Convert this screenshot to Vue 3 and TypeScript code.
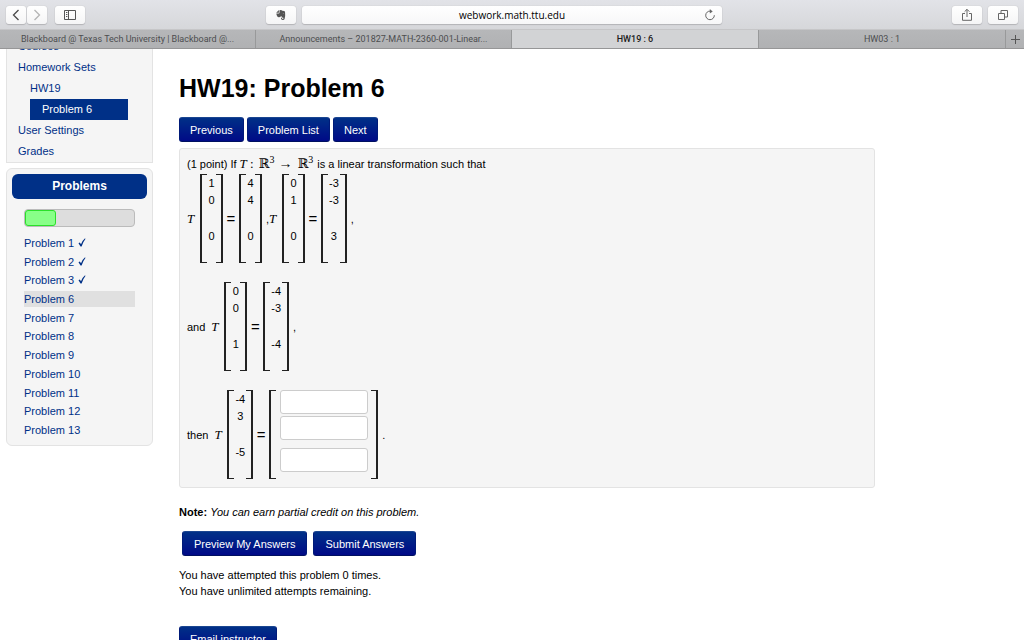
<script setup lang="ts">
import { ref } from 'vue'

interface Tab { title: string; active?: boolean }
interface Term { lead?: string; left: string[]; right: string[]; end: string }

const tabs: Tab[] = [
  { title: 'Blackboard @ Texas Tech University | Blackboard @...' },
  { title: 'Announcements – 201827-MATH-2360-001-Linear...' },
  { title: 'HW19 : 6', active: true },
  { title: 'HW03 : 1' },
]

const problems = [
  { n: 1, done: true }, { n: 2, done: true }, { n: 3, done: true },
  { n: 6, done: false }, { n: 7, done: false }, { n: 8, done: false },
  { n: 9, done: false }, { n: 10, done: false }, { n: 11, done: false },
  { n: 12, done: false }, { n: 13, done: false },
]
const current = 6

const rows: Term[][] = [
  [
    { left: ['1', '0', '', '0'], right: ['4', '4', '', '0'], end: ',' },
    { left: ['0', '1', '', '0'], right: ['-3', '-3', '', '3'], end: ',' },
  ],
  [{ lead: 'and', left: ['0', '0', '', '1'], right: ['-4', '-3', '', '-4'], end: ',' }],
]
const lastVector = ['-4', '3', '', '-5']
const answers = ref(['', '', ''])
const address = ref('webwork.math.ttu.edu')
</script>

<template>
  <div class="window">
    <header class="toolbar">
      <div class="side">
        <div class="pair">
          <button class="tool arrow" aria-label="Back">
            <svg width="8" height="12" viewBox="0 0 8 12"><path d="M6.5 1 L1.5 6 L6.5 11" fill="none" stroke="#4a4a4a" stroke-width="1.3" /></svg>
          </button>
          <button class="tool arrow" aria-label="Forward">
            <svg width="8" height="12" viewBox="0 0 8 12"><path d="M1.5 1 L6.5 6 L1.5 11" fill="none" stroke="#b4b4b4" stroke-width="1.3" /></svg>
          </button>
        </div>
        <button class="tool" aria-label="Show sidebar">
          <svg width="14" height="12" viewBox="0 0 14 12" fill="none" stroke="#555"><path d="M1.5 1.5h11v9h-11z M5.5 1.5v9" /><path d="M3 3.5h1.4M3 5.5h1.4M3 7.5h1.4" /></svg>
        </button>
        <button class="tool push" aria-label="Evernote">
          <svg width="12" height="12" viewBox="0 0 12 12"><path d="M1.2 3.7 L3.9 1.1 V3.4 Q3.9 3.8 3.5 3.8Z M4.5 1.2 Q6.4.6 7.3 1.7 L9.2 2 Q10 2.2 10.1 3.5 Q10.5 7.3 9.6 9.9 Q9.1 11.1 7.7 11 Q6 10.9 6 9.5 Q6 8.4 7.2 8.4 V9.4 Q6.8 9.7 7.3 10 Q8.3 10.2 8.6 9 Q6.7 8.7 6.2 7.1 Q5.6 8.4 3.8 8.2 Q1.8 8 1.3 4.4 H3.7 Q4.5 4.4 4.5 3.5Z" fill="#555" /><path d="M7.7 4.7 Q8.6 4.2 9 5.1Z" fill="#fff" /></svg>
        </button>
      </div>
      <div class="address">
        <input v-model="address" aria-label="Address" />
        <button class="reload" aria-label="Reload">
          <svg width="12" height="12" viewBox="0 0 12 12"><path d="M10.3 6.2 A4.3 4.3 0 1 1 6.4 2.1" fill="none" stroke="#666" /><path d="M5.8.1 L8.7 2.4 L5.8 4.4Z" fill="#666" /></svg>
        </button>
      </div>
      <div class="side end">
        <button class="tool" aria-label="Share">
          <svg width="12" height="14" viewBox="0 0 12 14" fill="none" stroke="#666"><path d="M4 5.5H1.5v6.8h9V5.5H8 M6 9V1.5 M3.6 3.7 L6 1.3 L8.4 3.7" /></svg>
        </button>
        <button class="tool" aria-label="Show all tabs">
          <svg width="12" height="12" viewBox="0 0 12 12" fill="none" stroke="#666"><path d="M1.5 4.5h6v6h-6z M4 4.2V1.5h6.5V8H7.8" /></svg>
        </button>
      </div>
    </header>

    <nav class="tabs" aria-label="Browser tabs">
      <button v-for="t in tabs" :key="t.title" class="tab" :class="{ active: t.active }">{{ t.title }}</button>
      <button class="tab" aria-label="New tab">
        <svg width="11" height="11" viewBox="0 0 11 11"><path d="M5.5 1v9M1 5.5h9" stroke="#555" /></svg>
      </button>
    </nav>

    <div class="page">
      <aside class="sidebar">
        <nav class="menu" aria-label="Course">
          <a href="#">Courses</a>
          <a href="#">Homework Sets</a>
          <a href="#" class="sub">HW19</a>
          <a href="#" class="chosen">Problem 6</a>
          <a href="#">User Settings</a>
          <a href="#">Grades</a>
        </nav>
        <section class="problems">
          <h2>Problems</h2>
          <div class="progress"><div class="done"></div></div>
          <ul>
            <li v-for="p in problems" :key="p.n" :class="{ current: p.n === current }">
              <a href="#">Problem {{ p.n }}<svg v-if="p.done" class="tick" width="8" height="9" viewBox="0 0 8 9"><path d="M.5 5.3 L1.8 4.5 L3 6.3 Q4.5 2.3 6.8.5 L7.6.7 Q5 3.8 3.6 8.6 H2.5Z" fill="#003087" /></svg></a>
            </li>
          </ul>
        </section>
      </aside>

      <main class="main">
        <h1>HW19: Problem 6</h1>
        <div class="buttons nav-buttons">
          <button class="btn">Previous</button>
          <button class="btn">Problem List</button>
          <button class="btn">Next</button>
        </div>

        <section class="panel">
          <p class="intro">(1 point) If <i class="math">T</i> <span class="math">:</span> <span class="math set">ℝ<sup>3</sup></span> <span class="math to">→</span> <span class="math set">ℝ<sup>3</sup></span> is a linear transformation such that</p>
          <div v-for="(row, r) in rows" :key="r" class="equation">
            <template v-for="(term, k) in row" :key="k">
              <span v-if="term.lead" class="lead">{{ term.lead }}</span>
              <i class="math t">T</i>
              <div class="matrix"><span v-for="(v, i) in term.left" :key="i">{{ v }}</span></div>
              <span class="eq">=</span>
              <div class="matrix"><span v-for="(v, i) in term.right" :key="i">{{ v }}</span></div>
              <span class="stop">{{ term.end }}</span>
            </template>
          </div>
          <div class="equation">
            <span class="lead">then</span>
            <i class="math t">T</i>
            <div class="matrix"><span v-for="(v, i) in lastVector" :key="i">{{ v }}</span></div>
            <span class="eq">=</span>
            <div class="matrix fields">
              <input v-for="(_, i) in answers" :key="i" v-model="answers[i]" :aria-label="`answer ${i + 1}`" />
            </div>
            <span class="stop">.</span>
          </div>
        </section>

        <p class="note"><b>Note:</b> <i>You can earn partial credit on this problem.</i></p>
        <div class="buttons submit-buttons">
          <button class="btn">Preview My Answers</button>
          <button class="btn">Submit Answers</button>
        </div>
        <p class="attempts">You have attempted this problem 0 times.<br>You have unlimited attempts remaining.</p>
        <button class="btn">Email instructor</button>
      </main>
    </div>
  </div>
</template>

<style>
html, body { overflow: hidden; background: #fff; }
</style>

<style scoped>
* { box-sizing: border-box; }
.window {
  height: 100vh;
  display: flex;
  flex-direction: column;
  overflow: hidden;
  font: 11px/16px "Liberation Sans", Arial, sans-serif;
  color: #000;
}
button, input { font: inherit; color: inherit; margin: 0; }

.toolbar {
  flex: none;
  height: 30px;
  padding: 0 6px;
  display: grid;
  grid-template-columns: 1fr 41.5% 1fr;
  gap: 6px;
  align-items: center;
  background: linear-gradient(#e2e3e8, #d6d7da);
  border-bottom: 1px solid #c6c6c8;
}
.side { display: flex; align-items: center; gap: 8px; }
.side.end { justify-content: flex-end; gap: 6px; }
.pair { display: flex; gap: 1px; }
.push { margin-left: auto; }
.tool {
  width: 30px;
  height: 18px;
  padding: 0;
  display: flex;
  align-items: center;
  justify-content: center;
  border: 0;
  border-radius: 3px;
  background: linear-gradient(#fff, #f5f5f6);
  box-shadow: 0 0 1px #aaa, 0 1px 1px #b4b4b8;
}
.tool.arrow { width: 20px; }
.address {
  display: flex;
  height: 18px;
  border-radius: 3px;
  background: linear-gradient(#fff, #f7f7f8);
  box-shadow: 0 0 1px #aaa, 0 1px 1px #b4b4b8;
}
.address input {
  flex: 1;
  min-width: 0;
  padding: 0 0 0 18px;
  border: 0;
  background: none;
  text-align: center;
  font: 10px/18px "Open Sans", "Noto Sans", sans-serif;
}
.reload { display: flex; align-items: center; width: 18px; padding: 0; border: 0; background: none; }

.tabs {
  flex: none;
  height: 19px;
  display: grid;
  grid-template-columns: 256fr 256fr 247fr 247fr 18px;
  border-bottom: 1px solid #969697;
}
.tab {
  display: flex;
  align-items: center;
  justify-content: center;
  min-width: 0;
  padding: 0 4px;
  border: 0;
  border-right: 1px solid #98999a;
  background: linear-gradient(#b6b7b9, #b0b1b3);
  color: #4c4d4f;
  white-space: nowrap;
  overflow: hidden;
  font: 9px/18px Roboto, sans-serif;
}
.tab.active { background: #d2d3d5; color: #1c1c1c; font-weight: 500; }
.tab:last-child { border-right: 0; padding: 0; }

.page { flex: 1; min-height: 0; display: flex; gap: 26px; padding-left: 6px; overflow: hidden; }
.sidebar { flex: none; width: 147px; }
a { color: #003087; text-decoration: none; }
.menu {
  display: flex;
  flex-direction: column;
  margin-top: -13px;
  padding: 0 24px 0 11px;
  background: #f5f5f5;
  border: 1px solid #e3e3e3;
  border-top: 0;
  line-height: 21px;
}
.menu .sub { padding-left: 12px; }
.menu .chosen { margin-left: 12px; padding-left: 12px; background: #003087; color: #fff; }

.problems {
  margin-top: 5px;
  padding: 5px;
  border: 1px solid #e3e3e3;
  border-radius: 6px;
  background: #f5f5f5;
}
.problems h2 {
  margin: 0;
  border-radius: 6px;
  background: #003087;
  color: #fff;
  text-align: center;
  font-size: 12px;
  line-height: 25px;
}
.progress {
  height: 18px;
  margin: 10px 12px 8px;
  border: 1px solid #bbb;
  border-radius: 4px;
  background: #ddd;
}
.done { width: 28%; height: 100%; border: 1px solid #2ae02a; border-radius: 3px; background: #8f8; }
.problems ul {
  display: flex;
  flex-direction: column;
  justify-content: space-between;
  height: 203px;
  margin: 0 12px 2px;
  padding: 0;
  list-style: none;
}
.current { background: #e0e0e0; }
.tick { margin-left: 4px; }

.main { flex: none; width: 68.4%; }
h1 { margin: 23px 0 13px; font-size: 25px; line-height: 32px; }
.buttons { display: flex; }
.nav-buttons { gap: 3px; }
.submit-buttons { gap: 6px; margin: 11px 0 11px; padding-left: 3px; }
.btn {
  height: 25px;
  padding: 0 10px;
  border: 1px solid #00206c;
  border-color: #1a4590 #001a78 #001060;
  border-radius: 3px;
  background: linear-gradient(#003087, #000a87);
  color: #fff;
}
.submit-buttons .btn { padding: 0 11px; }

.panel {
  margin-top: 6px;
  padding: 7px 7px 8px;
  border: 1px solid #e3e3e3;
  border-radius: 3px;
  background: #f5f5f5;
}
.intro { margin: 0 0 2px; height: 16px; white-space: nowrap; }
.math { font-family: "Liberation Serif", "DejaVu Serif", serif; font-size: 13px; line-height: 16px; }
.math.set { margin: 0 1px 0 2px; }
.math.to { font-size: 14px; }
.math sup { font-size: 10px; line-height: 0; vertical-align: 5px; }
.equation { display: flex; align-items: center; height: 89px; }
.equation + .equation { margin-top: 19px; }
.lead { margin-right: 6px; }
.t { width: 13px; }
.matrix {
  position: relative;
  display: grid;
  grid-template-rows: 17px 18px 18px 18px;
  align-content: start;
  min-width: 23px;
  height: 89px;
  padding: 0 8px;
  line-height: 18px;
  text-align: center;
}
.matrix::before, .matrix::after {
  content: "";
  position: absolute;
  top: 0;
  bottom: 0;
  width: 5px;
  border: 1px solid #222;
}
.matrix::before { left: 0; border-right: 0; border-left-width: 2px; }
.matrix::after { right: 0; border-left: 0; border-right-width: 2px; }
.eq { width: 16px; text-align: center; font-size: 15px; }
.stop { width: 7px; text-align: right; }
.fields { display: flex; flex-direction: column; gap: 2px; padding: 0 10px 0 11px; }
.fields input {
  width: 88px;
  height: 24px;
  padding: 0 4px;
  border: 1px solid #ccc;
  border-radius: 3px;
  background: #fff;
}
.fields input:last-child { margin-top: 6px; }

.note { margin: 16px 0 0; }
.attempts { margin: 0 0 27px; }
</style>
